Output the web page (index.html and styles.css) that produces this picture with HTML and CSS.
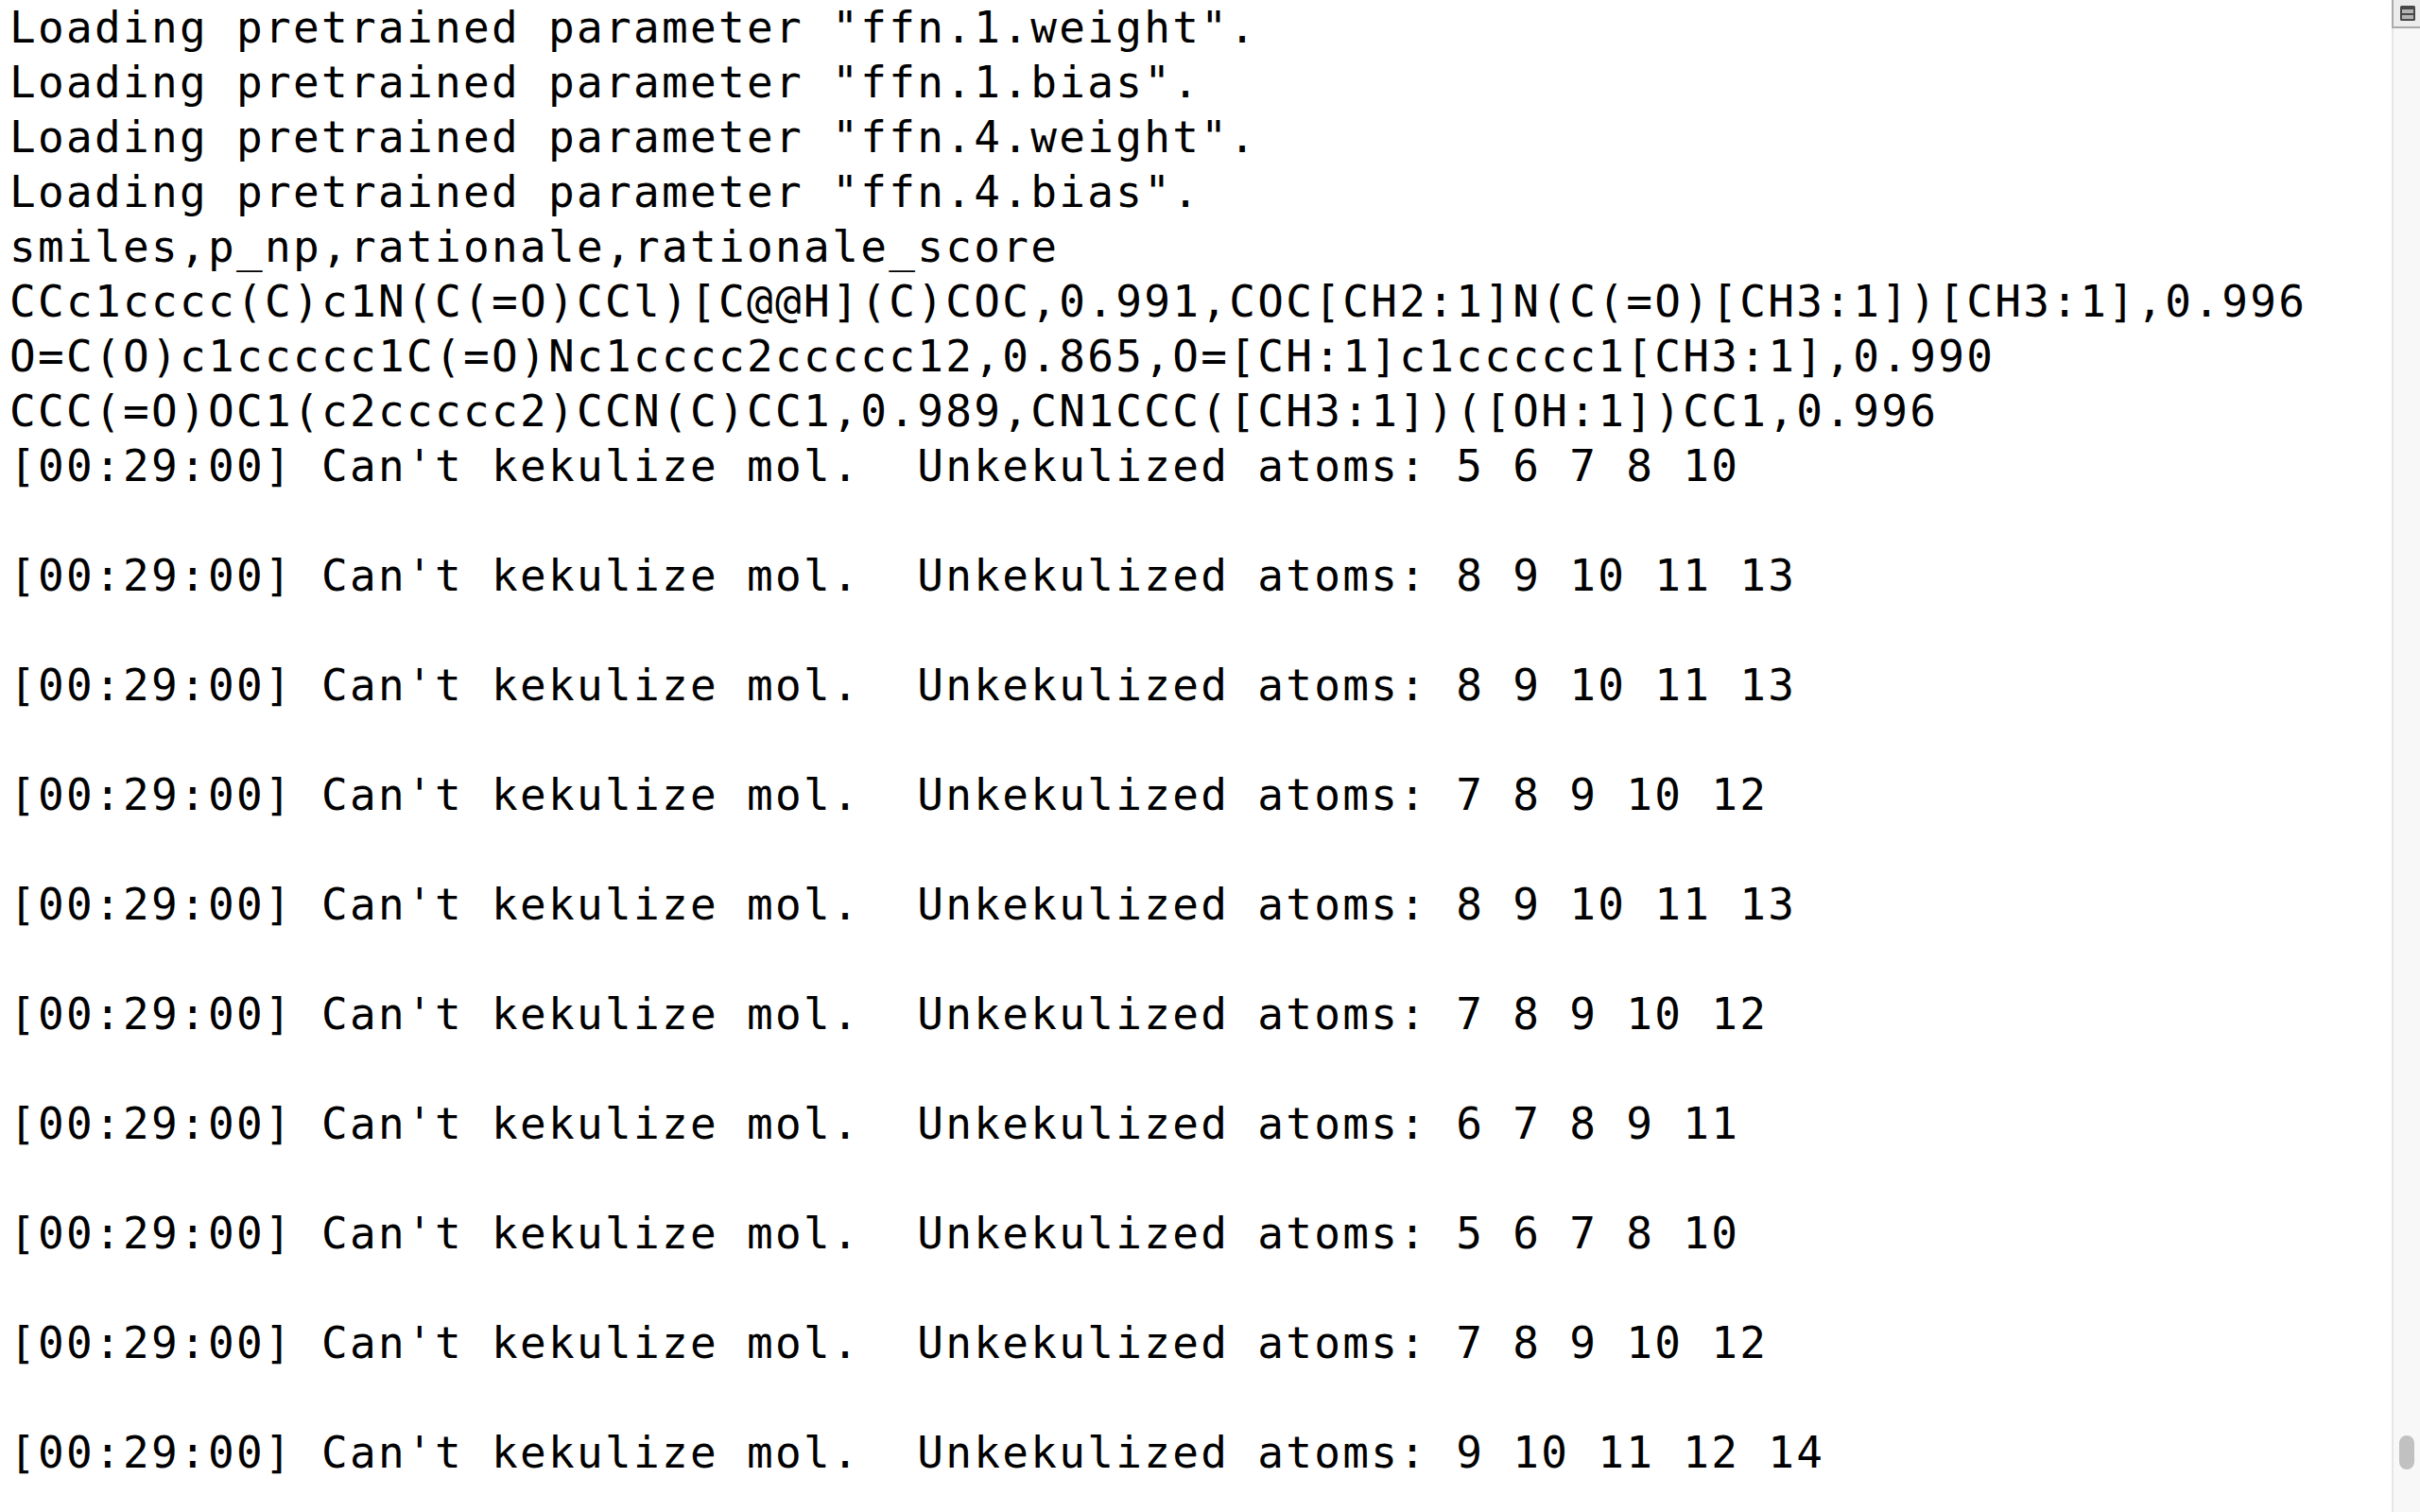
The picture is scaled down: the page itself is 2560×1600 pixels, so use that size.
FILE: index.html
```html
<!DOCTYPE html>
<html>
<head>
<meta charset="utf-8">
<title>Terminal</title>
<link rel="stylesheet" href="styles.css">
</head>
<body>
<div class="window">
<pre class="output">Loading pretrained parameter "ffn.1.weight".
Loading pretrained parameter "ffn.1.bias".
Loading pretrained parameter "ffn.4.weight".
Loading pretrained parameter "ffn.4.bias".
smiles,p_np,rationale,rationale_score
CCc1cccc(C)c1N(C(=O)CCl)[C@@H](C)COC,0.991,COC[CH2:1]N(C(=O)[CH3:1])[CH3:1],0.996
O=C(O)c1ccccc1C(=O)Nc1cccc2ccccc12,0.865,O=[CH:1]c1ccccc1[CH3:1],0.990
CCC(=O)OC1(c2ccccc2)CCN(C)CC1,0.989,CN1CCC([CH3:1])([OH:1])CC1,0.996
[00:29:00] Can't kekulize mol.  Unkekulized atoms: 5 6 7 8 10

[00:29:00] Can't kekulize mol.  Unkekulized atoms: 8 9 10 11 13

[00:29:00] Can't kekulize mol.  Unkekulized atoms: 8 9 10 11 13

[00:29:00] Can't kekulize mol.  Unkekulized atoms: 7 8 9 10 12

[00:29:00] Can't kekulize mol.  Unkekulized atoms: 8 9 10 11 13

[00:29:00] Can't kekulize mol.  Unkekulized atoms: 7 8 9 10 12

[00:29:00] Can't kekulize mol.  Unkekulized atoms: 6 7 8 9 11

[00:29:00] Can't kekulize mol.  Unkekulized atoms: 5 6 7 8 10

[00:29:00] Can't kekulize mol.  Unkekulized atoms: 7 8 9 10 12

[00:29:00] Can't kekulize mol.  Unkekulized atoms: 9 10 11 12 14</pre>
<aside class="scrollbar">
<div class="split-button">
<svg class="split-icon" width="16" height="16" viewBox="0 0 16 16"><rect x="0" y="0" width="16" height="16" rx="1.5" fill="#474747"/><rect x="2" y="4" width="12" height="4" fill="#b4b4b4"/><rect x="2" y="10" width="12" height="4" fill="#b4b4b4"/></svg>
</div>
<div class="track"><div class="thumb"></div></div>
</aside>
</div>
</body>
</html>
```

FILE: styles.css
```css
html, body {
  margin: 0;
  padding: 0;
  background: #ffffff;
  height: 100%;
  overflow: hidden;
}

.window {
  display: flex;
  flex-direction: row;
  width: 2560px;
  height: 1600px;
}

.output {
  flex: 1;
  margin: 0;
  padding: 0 0 0 10px;
  font-family: "DejaVu Sans Mono", "Liberation Mono", monospace;
  font-size: 46px;
  letter-spacing: 2.31px;
  line-height: 58px;
  color: #000000;
  white-space: pre;
  overflow: hidden;
}

.scrollbar {
  width: 30px;
  flex: none;
  display: flex;
  flex-direction: column;
  background: #f8f8f8;
  border-left: 2px solid #e6e6e6;
  box-sizing: border-box;
}

.split-button {
  height: 30px;
  box-sizing: border-box;
  margin-left: -2px;
  border-left: 2px solid #aaaaaa;
  border-bottom: 2px solid #aaaaaa;
  background: #ececec;
  display: flex;
  align-items: flex-start;
  justify-content: center;
  padding-top: 6px;
}

.split-icon {
  display: block;
  margin-left: 2px;
}

.track {
  flex: 1;
  display: flex;
  flex-direction: column;
  justify-content: flex-end;
  align-items: center;
  padding-bottom: 45px;
}

.thumb {
  width: 16px;
  height: 36px;
  border-radius: 8px;
  background: #c1c1c1;
}
```
